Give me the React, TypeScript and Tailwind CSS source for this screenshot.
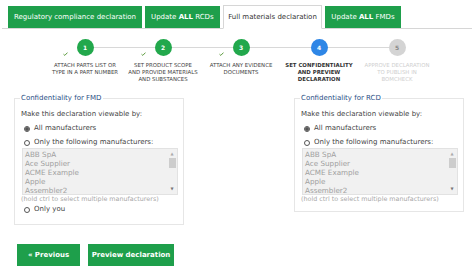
import React from "react";

const font = { fontFamily: '"DejaVu Sans", Verdana, sans-serif' };

function Tab({ children, active }: { children: React.ReactNode; active?: boolean }) {
  return active ? (
    <div className="h-[24px] -mb-px mt-[-2px] px-[4.5px] flex items-center bg-white border border-[#d6d6d6] border-b-white text-[7px] text-[#333]">
      {children}
    </div>
  ) : (
    <div className="h-[22px] px-[6px] flex items-center bg-[#1e9f4b] text-white text-[7px]">{children}</div>
  );
}

const steps = [
  { n: "1", lines: ["ATTACH PARTS LIST OR", "TYPE IN A PART NUMBER"], state: "done" },
  { n: "2", lines: ["SET PRODUCT SCOPE", "AND PROVIDE MATERIALS", "AND SUBSTANCES"], state: "done" },
  { n: "3", lines: ["ATTACH ANY EVIDENCE", "DOCUMENTS"], state: "done" },
  { n: "4", lines: ["SET CONFIDENTIALITY", "AND PREVIEW", "DECLARATION"], state: "active" },
  { n: "5", lines: ["APPROVE DECLARATION", "TO PUBLISH IN", "BOMCHECK"], state: "todo" },
];

function Check() {
  return (
    <svg width="5" height="4" viewBox="0 0 5 4" className="block">
      <path d="M0.5 2.2 L1.8 3.4 L4.5 0.6" stroke="#5a9a3c" strokeWidth="1" fill="none" />
    </svg>
  );
}

function Radio({ checked }: { checked?: boolean }) {
  return (
    <span className="inline-flex w-[6px] h-[6px] rounded-full border border-[#555] bg-white items-center justify-center mr-[4px] shrink-0">
      {checked && <span className="w-[4px] h-[4px] rounded-full bg-[#555]" />}
    </span>
  );
}

function ListBox() {
  const items = ["ABB SpA", "Ace Supplier", "ACME Example", "Apple", "Assembler2"];
  return (
    <div className="h-[47px] bg-[#f1f1f1] border border-[#e2e2e2] flex">
      <div className="flex-1 pl-[2px] pt-[1px] text-[7.2px] leading-[9px] text-[#a0a0a0]">
        {items.map((i) => (
          <div key={i}>{i}</div>
        ))}
      </div>
      <div className="w-[10px] flex flex-col items-center">
        <div className="text-[4px] leading-[6px] text-[#aaa] mt-[2px]">▲</div>
        <div className="w-[7px] h-[10px] bg-[#cdcdcd] mt-[1px]" />
        <div className="flex-1" />
        <div className="text-[4px] leading-[6px] text-[#777] mb-[2px]">▼</div>
      </div>
    </div>
  );
}

function Box({ title, onlyYou }: { title: string; onlyYou?: boolean }) {
  return (
    <fieldset className={`w-[170px] border border-[#e6e6e6] pl-[6px] pr-[5px] ${onlyYou ? "pb-[10px]" : "pb-[8px]"}`}>
      <legend className="text-[7px] text-[#2b4f86] px-[1px] ml-[-1px] leading-[9px]">{title}</legend>
      <div className="text-[7px] text-[#444] leading-[9px] mt-[7px]">Make this declaration viewable by:</div>
      <div className="flex items-center text-[7px] text-[#444] leading-[9px] mt-[5px] ml-[3px]">
        <Radio checked /> All manufacturers
      </div>
      <div className="flex items-center text-[7px] text-[#444] leading-[9px] mt-[5px] ml-[3px]">
        <Radio /> Only the following manufacturers:
      </div>
      <div className="ml-[1px] mt-[1px]">
        <ListBox />
      </div>
      <div className="text-[6.4px] text-[#a8a8a8] leading-[8px]">(hold ctrl to select multiple manufacturers)</div>
      {onlyYou && (
        <div className="flex items-center text-[7px] text-[#444] leading-[9px] mt-[2px] ml-[3px]">
          <Radio /> Only you
        </div>
      )}
    </fieldset>
  );
}

export default function App() {
  return (
    <div className="w-[474px] h-[271px] bg-white overflow-hidden" style={font}>
      <div className="pt-[6px] pl-[6px] flex items-end gap-[3px] border-b border-[#d6d6d6] mx-[2px]">
        <Tab>Regulatory compliance declaration</Tab>
        <Tab>
          Update&nbsp;<b>ALL</b>&nbsp;RCDs
        </Tab>
        <Tab active>Full materials declaration</Tab>
        <Tab>
          Update&nbsp;<b>ALL</b>&nbsp;FMDs
        </Tab>
      </div>

      <div className="relative ml-[46px] mt-[10px] flex">
        <div className="absolute left-[39px] w-[312px] top-[8px] h-[1px] bg-[#d8d8d8]" />
        {steps.map((s) => (
          <div key={s.n} className="w-[78px] flex flex-col items-center relative">
            <div
              className={`w-[17px] h-[17px] rounded-full flex items-center justify-center text-[6px] font-bold ${
                s.state === "done"
                  ? "bg-[#22a84c] text-white"
                  : s.state === "active"
                  ? "bg-[#2e86e6] text-white"
                  : "bg-[#d4d4d4] text-[#888]"
              }`}
            >
              {s.n}
            </div>
            {s.state === "done" && (
              <div className="absolute left-[17px] top-[13px]">
                <Check />
              </div>
            )}
            <div
              className={`mt-[6px] text-center text-[5.4px] leading-[7px] whitespace-nowrap ${
                s.state === "active" ? "font-bold text-[#333]" : s.state === "todo" ? "text-[#cfcfcf]" : "text-[#444]"
              }`}
            >
              {s.lines.map((l) => (
                <div key={l}>{l}</div>
              ))}
            </div>
          </div>
        ))}
      </div>

      <div className="flex items-start justify-between pl-[14px] pr-[10px] mt-[11px]">
        <Box title="Confidentiality for FMD" onlyYou />
        <Box title="Confidentiality for RCD" />
      </div>

      <div className="flex gap-[8px] pl-[17px] mt-[19px]">
        <button className="w-[63px] h-[22px] bg-[#1e9f4b] text-white text-[7px] font-bold">« Previous</button>
        <button className="w-[86px] h-[22px] bg-[#1e9f4b] text-white text-[7px] font-bold">Preview declaration</button>
      </div>
    </div>
  );
}
